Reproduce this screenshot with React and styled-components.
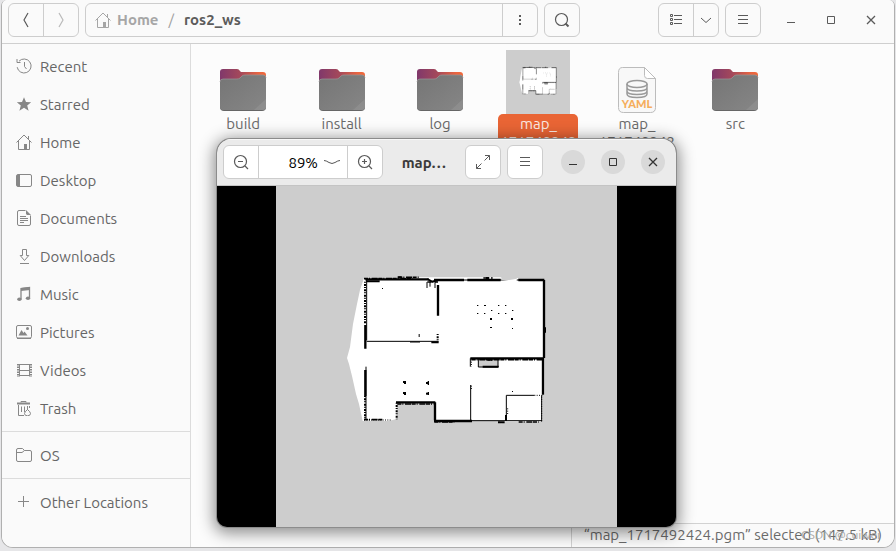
import React, { useState } from 'react'
import styled, { createGlobalStyle } from 'styled-components'

const GlobalStyle=createGlobalStyle`
  *{
    box-sizing:border-box;
  }
  body{
    margin:0;
    background:#e6e6e8;
    font-family:Ubuntu, "Noto Sans", "Open Sans", sans-serif;
    font-size:15px;
    overflow:hidden;
  }
  button{
    font:inherit;
    color:inherit;
    background:none;
    border:0;
    margin:0;
    padding:0;
  }
  svg{
    display:block;
    flex:none;
  }
`
const Desktop=styled.div`
  position:relative;
  display:flex;
  min-height:100vh;
  padding:0 1px 3px;
`
const Files=styled.main`
  flex:1;
  min-width:0;
  display:flex;
  flex-direction:column;
  overflow:hidden;
  background:#fcfcfc;
  border:1px solid #b0b0b0;
  border-top:0;
  border-radius:6px 6px 12px 12px;
  color:#6a6a6a;
`
const Toolbar=styled.header`
  display:flex;
  align-items:center;
  gap:6px;
  height:44px;
  padding:0 11px 4px 6px;
  background:#fafafa;
  border-bottom:1px solid #cfcfcf;
`
const Group=styled.div`
  display:flex;
  height:34px;
  flex:${p=>p.$grow?1:'none'};
  margin-right:${p=>p.$space||0}px;
  background:${p=>p.$solid?'#ffffff':'#fafafa'};
  border:1px solid #cdcdcd;
  border-radius:6px;
  overflow:hidden;
`
const ToolButton=styled.button`
  display:flex;
  align-items:center;
  justify-content:center;
  width:${p=>p.$narrow?24:34}px;
  color:#5a5a5a;
  opacity:${p=>p.disabled?0.4:1};
`
const Split=styled.span`
  width:1px;
  background:#cdcdcd;
`
const Path=styled.nav`
  flex:1;
  display:flex;
  align-items:center;
  gap:10px;
  padding:0 9px;
  font-weight:bold;
`
const Crumb=styled.a`
  display:flex;
  align-items:center;
  gap:6px;
  text-decoration:none;
  color:${p=>p.$current?'#5c5c5c':'#a6a6a6'};
`
const Slash=styled.span`
  font-weight:normal;
  color:#a0a0a0;
`
const WindowButton=styled.button`
  display:flex;
  align-items:center;
  justify-content:center;
  width:24px;
  height:24px;
  border-radius:50%;
  color:${p=>p.$round?'#333333':'#5a5a5a'};
  background:${p=>p.$round?'#d9d9d9':'none'};
`
const WindowButtons=styled.div`
  display:flex;
  gap:16px;
  margin-left:${p=>p.$offset}px;
`
const Body=styled.div`
  flex:1;
  display:flex;
`
const Sidebar=styled.nav`
  width:189px;
  flex:none;
  padding-top:3px;
  background:#fafafa;
  border-right:1px solid #dcdcdc;
`
const Places=styled.ul`
  list-style:none;
  margin:0;
  padding:0 0 4px;
  &+&{
    border-top:1px solid #dcdcdc;
    padding:4px 0;
  }
`
const Place=styled.a`
  display:flex;
  align-items:center;
  gap:8px;
  height:38px;
  padding-left:14px;
  color:#666666;
  text-decoration:none;
  svg{
    color:#878787;
  }
`
const Content=styled.section`
  position:relative;
  flex:1;
  min-width:0;
`
const Grid=styled.div`
  display:grid;
  grid-template-columns:repeat(7, 1fr);
  padding:6px 11px 0 3px;
`
const File=styled.button`
  display:flex;
  flex-direction:column;
  align-items:center;
  align-self:start;
`
const Thumb=styled.span`
  display:flex;
  align-items:flex-end;
  justify-content:center;
  width:64px;
  height:64px;
`
const Label=styled.span`
  width:80px;
  padding:1px 0;
  border-radius:5px;
  line-height:18px;
  white-space:pre-line;
  color:${p=>p.$selected?'#fbe9e2':'#6a6a6a'};
  background:${p=>p.$selected?'#e96535':'none'};
`
const Status=styled.div`
  position:absolute;
  right:0;
  bottom:0;
  height:24px;
  padding:0 12px;
  line-height:22px;
  white-space:nowrap;
  background:#fafafa;
  border:1px solid #d2d2d2;
  border-width:1px 0 0 1px;
`
const Watermark=styled.span`
  position:absolute;
  right:14px;
  bottom:1px;
  font-size:12px;
  color:#a8a8a8;
`
const Viewer=styled.section`
  position:absolute;
  left:217px;
  top:139px;
  width:459px;
  overflow:hidden;
  border-radius:14px 14px 10px 10px;
  background:#000000;
  color:#3b3b3b;
  box-shadow:0 0 0 1px #8c8c8c, 0 3px 16px 3px rgba(0,0,0,.45);
`
const ViewerBar=styled.header`
  display:flex;
  align-items:center;
  gap:6px;
  height:47px;
  padding:0 11px 1px 6px;
  background:#ebebeb;
  border-top:1px solid #f8f8f8;
  border-bottom:1px solid #c4c4c4;
`
const Zoom=styled.button`
  display:flex;
  align-items:center;
  justify-content:flex-end;
  gap:6px;
  width:88px;
  padding-right:7px;
  color:#000000;
  svg{
    color:#555555;
  }
`
const Title=styled.h1`
  flex:1;
  margin:0;
  font-size:15px;
  text-align:center;
`
const Canvas=styled.div`
  display:flex;
  justify-content:center;
`

const Icon=({children,size=16})=>(
  <svg width={size} height={size} viewBox={`0 0 ${size} ${size}`} fill="none" stroke="currentColor" aria-hidden="true">
    {children}
  </svg>
)

const icons={
  recent:<><path d="M3 3.2a7 7 0 1 1-1.8 6M1 1v3.5h3.5"/><path d="M8.5 4v4.5L10.5 11"/></>,
  starred:<path fill="currentColor" stroke="none" d="M8 1.2l2 4.8 5.2.3-4 3.3 1.4 5.1L8 11.8l-4.6 2.9 1.4-5.1-4-3.3L6 6z"/>,
  home:<><path d="M.5 8.5L8 1l7.500 7.500M2.500 7v8.500h11V7M12.500 5V2"/><path fill="currentColor" stroke="none" d="M8 10h3v5H8z"/></>,
  desktop:<><rect x=".5" y="2.500" width="15" height="12" rx="1.500"/><path fill="currentColor" stroke="none" d="M1 3h3v11H1z"/></>,
  documents:<><path d="M9.500.5H3A1.500 1.500 0 0 0 1.500 2v12A1.500 1.500 0 0 0 3 15.500h10a1.500 1.500 0 0 0 1.500-1.500V5.500M4 6.500h6M4 8.500h8M4 10.500h8M4 12.500h4"/><path fill="currentColor" stroke="none" d="M10 0l5 5h-4l-1-1z"/></>,
  downloads:<path d="M6.500 1.500h4v6h2.300L8.500 12.500 4.200 7.500h2.300zM4 15.500h9"/>,
  music:<><path strokeWidth="1.300" d="M5 13V2.500l8.500-1V12"/><path fill="currentColor" stroke="none" d="M5 2l9-1v3L5 5z"/><ellipse cx="3.400" cy="13.300" rx="2.200" ry="1.800" fill="currentColor" stroke="none"/><ellipse cx="12" cy="12.300" rx="2.200" ry="1.800" fill="currentColor" stroke="none"/></>,
  pictures:<><rect x=".5" y="1.500" width="15" height="12.500" rx="1.500"/><path d="M1 14.500h14"/><path fill="currentColor" stroke="none" d="M2.500 11.500L5.500 6l2 3 1-1.500 3 4z"/><circle cx="11.500" cy="4.500" r="1.500" fill="currentColor" stroke="none"/></>,
  videos:<><path d="M3.500 2v12.500M13.500 2v12.500M3 2.500h11M3 8.500h11M3 13.500h11"/><path strokeDasharray="1.500 1" strokeWidth="2" d="M2 2v13M15 2v13"/></>,
  trash:<><path strokeWidth="2" d="M1 3.500h13"/><path d="M5 2.500v-1h5v1M2.500 5v10.500H8M5.500 6.500V12M8.500 6.500V12M11.500 6v4"/><path d="M8.500 13.500a3 2.300 0 1 0 6 0q0-1.500-3-4-3 2.500-3 4zM13.500 6v2"/></>,
  folder:<path d="M.5 13V3A1.500 1.500 0 0 1 2 1.500h4.500L8.500 3.500H14A1.500 1.500 0 0 1 15.500 5v8a1.500 1.500 0 0 1-1.500 1.500H2A1.500 1.500 0 0 1 .5 13zM.5 5.500h5.500L8.500 3.500"/>,
  plus:<path d="M7.500 2v11M2 7.500h11"/>,
  back:<path strokeWidth="1.200" d="M10 1L6 8l4 7"/>,
  forward:<path strokeWidth="1.200" d="M6 1l4 7-4 7"/>,
  more:<path fill="currentColor" stroke="none" d="M7 3h2v2H7zM7 7h2v2H7zM7 11h2v2H7z"/>,
  search:<><circle cx="7.500" cy="7.500" r="6" strokeWidth="1.200"/><path strokeWidth="2" d="M11.500 11.500l3 3"/></>,
  list:<path d="M2.500 2.500h2v2h-2zM2.500 6.500h2v2h-2zM2.500 10.500h2v2h-2zM6 3.500h8M6 7.500h8M6 11.500h8"/>,
  down:<path d="M3 6l5 4.500L13 6"/>,
  menu:<path d="M3 3.500h10M3 7.500h10M3 11.500h10"/>,
  minimize:<path d="M4 10.500h8"/>,
  maximize:<path d="M4.500 4.500h7v7h-7z"/>,
  close:<path strokeWidth="1.300" d="M4 4l8 8M12 4l-8 8"/>,
  zoomOut:<><circle cx="7.500" cy="7.500" r="6" strokeWidth="1.200"/><path strokeWidth="1.200" d="M12 12l3 3M5 7.500h5"/></>,
  zoomIn:<><circle cx="7.500" cy="7.500" r="6" strokeWidth="1.200"/><path strokeWidth="1.200" d="M12 12l3 3M5 7.500h5M7.500 5v5"/></>,
  wide:<path d="M0 6.500q2 0 5 2 3 2 6 0 3-2 5-2"/>,
  expand:<path d="M9.500 6.500l5-5M10 1.500h4.500V6M6.500 9.500l-5 5M6 14.500H1.500V10"/>,
}

// stray scan readings, x / y / width / height
const specks=[
  [126,54,3,3],[236,192,3,9],[411,105,4,3],[432,105,6,3],[474,105,4,3],[495,105,4,3],
  [411,129,4,3],[432,129,4,3],[453,120,4,3],[474,129,4,3],[495,129,4,3],[516,120,4,3],
  [450,144,6,6],[513,144,6,6],[450,171,6,3],[516,174,3,3],[516,363,3,3],
  [189,333,9,6],[258,336,9,6],[192,339,6,3],[263,333,4,12],[189,366,9,6],[192,372,6,3],[258,368,9,6],[263,366,4,9],
]

const RoomMap=({size})=>(
  <svg width={size} height={size} viewBox="-192 -252 1023 1023" role="img" aria-label="Floor map">
    <path fill="#cdcdcd" d="M-192-252h1023V771H-192z"/>
    <path fill="#ffffff" d="M72 24h120l3-2h288l20 8 30-6 5 6h75v345h-6v80H500l-16 5-5-8H283v-55H170v50l-24 6H68L57 402 48 372 36 318 27 282 21 264l9-33 9-69 12-60 9-42z"/>
    <path fill="#cdcdcd" stroke="#000000" strokeWidth="3" d="M415 267h59v24h-59z"/>
    <g fill="none" stroke="#000000">
      <path strokeWidth="7" d="M76 28h190M76 165v71M76 300v78M294 45v92M282 30h90M382 30h100M535 30h78M612 30v234M609 264v110M391 265h219M168 397h118M285 397v54M282 453h114"/>
      <path strokeWidth="3" d="M80 25v186M80 214h215M392 345v108M499 376h84M499 376v76M396 452h210M605 376v79M78 290v160M287 30h322M391 265v25"/>
      <path strokeWidth="6" strokeDasharray="3 4 6 3" d="M75 35v128M75 378v72M293 192v24M170 398v50"/>
      <path strokeWidth="5" strokeDasharray="12 3 3 5 18 2" d="M72 26h145M175 22h62M72 449h55M262 36h32M430 24h28M395 269h213M172 402h110M536 456h60M283 456h60"/>
      <path strokeWidth="3" strokeDasharray="3 4" d="M394 268v22M394 347v12M503 415v20M605 380v75M583 376h24M72 450h80"/>
      <path strokeWidth="3" d="M261 36v18M270 36v14M285 36v18M210 216h30"/>
      <path strokeWidth="6" d="M262 27l14 8 16-4M474 457h20M438 24h9M428 290h48M498 435v18M274 217h22M442 269h16M79 34h40M615 172v16M173 22h12"/>
    </g>
    <path stroke="#cdcdcd" strokeWidth="10" d="M484 26h46"/>
    <path fill="#ffffff" d="M484 34l46-8v12h-46z"/>
    <g fill="#000000">
      {specks.map(([x,y,w,h])=><rect key={`${x}-${y}`} x={x} y={y} width={w} height={h}/>)}
    </g>
  </svg>
)

const Folder=()=>(
  <svg width="48" height="48" viewBox="0 0 48 48" aria-hidden="true">
    <defs>
      <linearGradient id="tab">
        <stop offset="0" stopColor="#80386b"/>
        <stop offset=".45" stopColor="#a5495a"/>
        <stop offset=".85" stopColor="#ea6540"/>
        <stop offset="1" stopColor="#f0693a"/>
      </linearGradient>
      <linearGradient id="front" x2="1" y2="1">
        <stop offset="0" stopColor="#757575"/>
        <stop offset="1" stopColor="#868686"/>
      </linearGradient>
    </defs>
    <path fill="url(#tab)" d="M1 22V6q0-3 3-3h14q2 0 3 2l1 1h22q3 0 3 3v13z"/>
    <path fill="#666666" d="M1 16h46v25q0 4-4 4H5q-4 0-4-4z"/>
    <path fill="url(#front)" d="M1 16q0-3 3-3h14q2 0 3-1l2-2q1-1 3-1h18q3 0 3 3v29q0 3-3 3H4q-3 0-3-3z"/>
    <path fill="none" stroke="#999999" strokeWidth=".7" d="M1 16q0-3 3-3h14q2 0 3-1l2-2q1-1 3-1h18q3 0 3 3"/>
    <path fill="#929292" d="M47 33v8q0 3-3 3h-9z" opacity=".7"/>
  </svg>
)

const YamlFile=()=>(
  <svg width="48" height="48" viewBox="0 0 48 48" aria-hidden="true">
    <path fill="#f8f8f8" stroke="#bcbcbc" d="M9.500 1.500h22l11 11v29q0 5-5 5h-27q-5 0-5-5v-35q0-5 4-5z"/>
    <path fill="#ffffff" stroke="#bcbcbc" d="M31.500 1.500v8q0 3 3 3h8z"/>
    <g fill="none" stroke="#999999" strokeWidth="1.500">
      <ellipse cx="24" cy="18" rx="10" ry="3.500"/>
      <path d="M14 18v10c0 4.700 20 4.700 20 0V18M14 21.500c0 4.700 20 4.700 20 0M14 25c0 4.700 20 4.700 20 0"/>
    </g>
    <text x="24" y="42" textAnchor="middle" fontFamily="Lato, sans-serif" fontSize="11" fontWeight="900" fill="#f5ad5c">YAML</text>
  </svg>
)

const places=[
  ['recent','Recent'],
  ['starred','Starred'],
  ['home','Home'],
  ['desktop','Desktop'],
  ['documents','Documents'],
  ['downloads','Downloads'],
  ['music','Music'],
  ['pictures','Pictures'],
  ['videos','Videos'],
  ['trash','Trash'],
]

const files=[
  {name:'build',icon:<Folder/>},
  {name:'install',icon:<Folder/>},
  {name:'log',icon:<Folder/>},
  {name:'map_\n171749242\n4.pgm',icon:<RoomMap size={64}/>},
  {name:'map_\n171749242\n4.yaml',icon:<YamlFile/>},
  {name:'src',icon:<Folder/>},
]

const PlaceList=({items})=>(
  <Places>
    {items.map(([icon,name])=>(
      <li key={name}>
        <Place href="#"><Icon>{icons[icon]}</Icon>{name}</Place>
      </li>
    ))}
  </Places>
)

const Controls=({round,offset})=>(
  <WindowButtons $offset={offset}>
    <WindowButton $round={round} aria-label="Minimize"><Icon>{icons.minimize}</Icon></WindowButton>
    <WindowButton $round={round} aria-label="Maximize"><Icon>{icons.maximize}</Icon></WindowButton>
    <WindowButton $round={round} aria-label="Close"><Icon>{icons.close}</Icon></WindowButton>
  </WindowButtons>
)

const App = () => {
  const [selected,setSelected]=useState(3);
  return (
    <Desktop>
      <GlobalStyle/>
      <Files>
        <Toolbar>
          <Group>
            <ToolButton aria-label="Back"><Icon>{icons.back}</Icon></ToolButton>
            <Split/>
            <ToolButton aria-label="Forward" disabled><Icon>{icons.forward}</Icon></ToolButton>
          </Group>
          <Group $grow>
            <Path>
              <Crumb href="#"><Icon>{icons.home}</Icon>Home</Crumb>
              <Slash>/</Slash>
              <Crumb href="#" $current>ros2_ws</Crumb>
            </Path>
            <Split/>
            <ToolButton aria-label="More"><Icon>{icons.more}</Icon></ToolButton>
          </Group>
          <Group $space={72}>
            <ToolButton aria-label="Search"><Icon>{icons.search}</Icon></ToolButton>
          </Group>
          <Group>
            <ToolButton aria-label="List view"><Icon>{icons.list}</Icon></ToolButton>
            <Split/>
            <ToolButton $narrow aria-label="View options"><Icon>{icons.down}</Icon></ToolButton>
          </Group>
          <Group>
            <ToolButton aria-label="Menu"><Icon>{icons.menu}</Icon></ToolButton>
          </Group>
          <Controls offset={12}/>
        </Toolbar>
        <Body>
          <Sidebar>
            <PlaceList items={places}/>
            <PlaceList items={[['folder','OS']]}/>
            <PlaceList items={[['plus','Other Locations']]}/>
          </Sidebar>
          <Content>
            <Grid>
              {files.map((f,i)=>(
                <File key={f.name} onClick={()=>setSelected(i)}>
                  <Thumb>{f.icon}</Thumb>
                  <Label $selected={selected===i}>{f.name}</Label>
                </File>
              ))}
            </Grid>
            <Status>
              “map_1717492424.pgm” selected (147.5 kB)
              <Watermark>CSDN @cuiwei</Watermark>
            </Status>
          </Content>
        </Body>
      </Files>
      <Viewer>
        <ViewerBar>
          <Group $solid>
            <ToolButton aria-label="Zoom out"><Icon>{icons.zoomOut}</Icon></ToolButton>
            <Split/>
            <Zoom>89%<Icon>{icons.wide}</Icon></Zoom>
            <Split/>
            <ToolButton aria-label="Zoom in"><Icon>{icons.zoomIn}</Icon></ToolButton>
          </Group>
          <Title>map…</Title>
          <Group $solid>
            <ToolButton aria-label="Fullscreen"><Icon>{icons.expand}</Icon></ToolButton>
          </Group>
          <Group $solid>
            <ToolButton aria-label="Menu"><Icon>{icons.menu}</Icon></ToolButton>
          </Group>
          <Controls round offset={12}/>
        </ViewerBar>
        <Canvas>
          <RoomMap size={341}/>
        </Canvas>
      </Viewer>
    </Desktop>
  )
}

export default App
